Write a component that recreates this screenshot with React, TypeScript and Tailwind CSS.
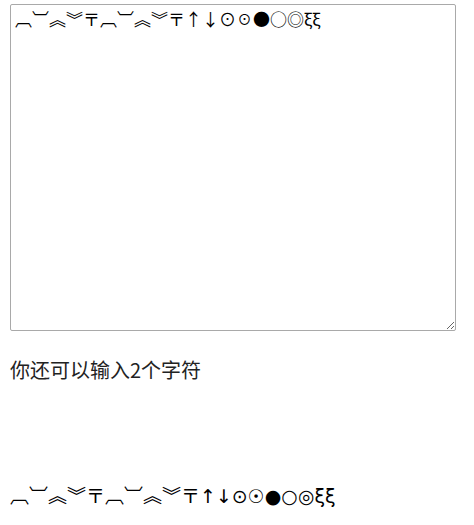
import React, { useState } from 'react';

const MAX = 21;
const INIT = '︹︺︽︾〒︹︺︽︾〒↑↓⊙☉●○◎ξξ';

export default function App() {
  const [text, setText] = useState(INIT);
  const left = MAX - Array.from(text).length;

  return (
    <div className="bg-white min-h-[525px] px-[10px] pt-[4px] text-[#222] font-['Noto_Sans_CJK_SC','DejaVu_Sans',sans-serif]">
      <textarea
        value={text}
        onChange={(e) => setText(e.target.value)}
        className="block w-[446px] h-[327px] border border-[#a9a9a9] rounded-[2px] px-[4px] py-[2px] text-[17px] leading-[24px] text-black outline-none resize font-['Noto_Sans_CJK_SC','DejaVu_Sans',sans-serif]"
      />

      <p className="mt-[24px] text-[20px] leading-[30px] text-[#222]">你还可以输入{left}个字符</p>

      <p className="mt-[98px] text-[19px] leading-[26px] text-black font-['DejaVu_Sans','Noto_Sans_CJK_SC',sans-serif]">
        {text}
      </p>
    </div>
  );
}
